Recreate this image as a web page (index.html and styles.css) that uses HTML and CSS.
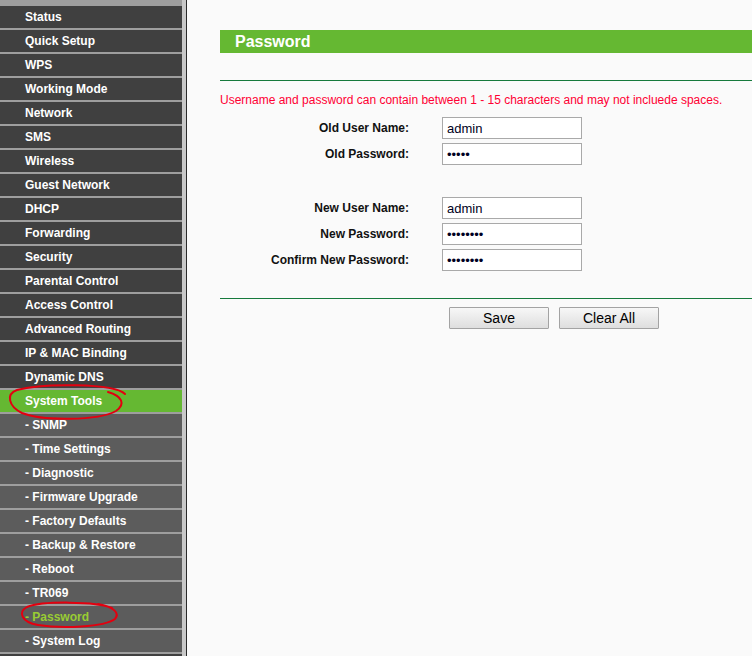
FILE: index.html
```html
<!DOCTYPE html>
<html>
<head>
<meta charset="utf-8">
<title>Password</title>
<link rel="stylesheet" href="styles.css">
</head>
<body>
<div class="page">
  <nav class="sidebar">
    <div class="menu">
      <div class="item">Status</div>
      <div class="item">Quick Setup</div>
      <div class="item">WPS</div>
      <div class="item">Working Mode</div>
      <div class="item">Network</div>
      <div class="item">SMS</div>
      <div class="item">Wireless</div>
      <div class="item">Guest Network</div>
      <div class="item">DHCP</div>
      <div class="item">Forwarding</div>
      <div class="item">Security</div>
      <div class="item">Parental Control</div>
      <div class="item">Access Control</div>
      <div class="item">Advanced Routing</div>
      <div class="item">IP &amp; MAC Binding</div>
      <div class="item">Dynamic DNS</div>
      <div class="item active">System Tools</div>
      <div class="item sub">- SNMP</div>
      <div class="item sub">- Time Settings</div>
      <div class="item sub">- Diagnostic</div>
      <div class="item sub">- Firmware Upgrade</div>
      <div class="item sub">- Factory Defaults</div>
      <div class="item sub">- Backup &amp; Restore</div>
      <div class="item sub">- Reboot</div>
      <div class="item sub">- TR069</div>
      <div class="item sub current">- Password</div>
      <div class="item sub">- System Log</div>
      <div class="item"></div>
    </div>
  </nav>
  <main class="content">
    <div class="title-bar">Password</div>
    <div class="rule rule-top"></div>
    <p class="note">Username and password can contain between 1 - 15 characters and may not incluede spaces.</p>
    <div class="form">
      <label class="label">Old User Name:</label>
      <input class="field" type="text" value="admin">
      <label class="label">Old Password:</label>
      <input class="field dots" type="text" value="•••••">
      <div class="blank"></div>
      <div class="blank"></div>
      <label class="label">New User Name:</label>
      <input class="field" type="text" value="admin">
      <label class="label">New Password:</label>
      <input class="field dots" type="text" value="••••••••">
      <label class="label">Confirm New Password:</label>
      <input class="field dots" type="text" value="••••••••">
    </div>
    <div class="rule rule-bottom"></div>
    <div class="buttons">
      <button class="btn">Save</button>
      <button class="btn">Clear All</button>
    </div>
  </main>
  <svg class="marks" width="752" height="656" viewBox="0 0 752 656">
    <path d="M125 394 C 114 383, 42 383, 17 390 C 6 394, 8 406, 22 413 C 42 421, 98 421, 116 411 C 126 404, 122 396, 108 392" />
    <path d="M112 608 C 96 601, 42 601, 27 607 C 18 612, 21 622, 38 625 C 62 629, 104 627, 115 619 C 120 613, 114 607, 98 604" />
  </svg>
</div>
</body>
</html>
```

FILE: styles.css
```css
html, body {
  margin: 0;
  padding: 0;
  background: #fafafa;
}

.page {
  position: relative;
  display: flex;
  width: 752px;
  height: 656px;
  overflow: hidden;
  font-family: "Liberation Sans", Arial, sans-serif;
}

.sidebar {
  width: 182px;
  flex: 0 0 182px;
  height: 656px;
  overflow: hidden;
  background: #9e9e9e;
  border-right: 4px solid #c8c8c8;
  box-shadow: 1px 0 0 #2a2a2a;
  margin-right: 1px;
}

.menu {
  display: flex;
  flex-direction: column;
  gap: 2px;
  padding-top: 6px;
}

.item {
  height: 22px;
  flex: 0 0 22px;
  line-height: 22px;
  padding-left: 25px;
  background: #404040;
  color: #ffffff;
  font-size: 12px;
  font-weight: bold;
  white-space: nowrap;
}

.item.sub {
  background: #5c5c5c;
}

.item.active {
  background: #65b832;
}

.item.current {
  color: #99cc33;
}

.content {
  flex: 1;
  padding-top: 30px;
  padding-left: 33px;
}

.title-bar {
  height: 23px;
  line-height: 23px;
  background: #65b832;
  color: #ffffff;
  font-size: 16px;
  font-weight: bold;
  padding-left: 15px;
}

.rule {
  height: 0;
  border-top: 1px solid #167a3c;
}

.rule-top {
  margin-top: 27px;
}

.note {
  margin: 12px 0 0 0;
  line-height: 14px;
  font-size: 12px;
  color: #ff0033;
  white-space: nowrap;
}

.form {
  display: grid;
  grid-template-columns: 189px 140px;
  grid-template-rows: 22px 22px 24px 22px 22px 22px;
  column-gap: 33px;
  row-gap: 4px;
  margin-top: 10px;
}

.label {
  text-align: right;
  font-size: 12px;
  font-weight: bold;
  color: #111111;
  line-height: 22px;
  white-space: nowrap;
}

.field {
  box-sizing: border-box;
  width: 140px;
  height: 22px;
  margin: 0;
  border: 1px solid #a9a9a9;
  background: #ffffff;
  padding: 0 4px;
  font-family: "Liberation Sans", Arial, sans-serif;
  font-size: 13px;
  color: #000022;
  outline: none;
}

.rule-bottom {
  margin-top: 27px;
}

.buttons {
  display: flex;
  gap: 10px;
  margin-top: 8px;
  padding-left: 229px;
}

.btn {
  box-sizing: border-box;
  width: 100px;
  height: 22px;
  margin: 0;
  padding: 0;
  border: 1px solid #a3a3a3;
  border-radius: 1px;
  background: linear-gradient(#f7f7f7, #dedede);
  font-family: "Liberation Sans", Arial, sans-serif;
  font-size: 14px;
  color: #000000;
}

.marks {
  position: absolute;
  left: 0;
  top: 0;
  pointer-events: none;
  fill: none;
  stroke: #e3000f;
  stroke-width: 2;
  stroke-linecap: round;
}
```
